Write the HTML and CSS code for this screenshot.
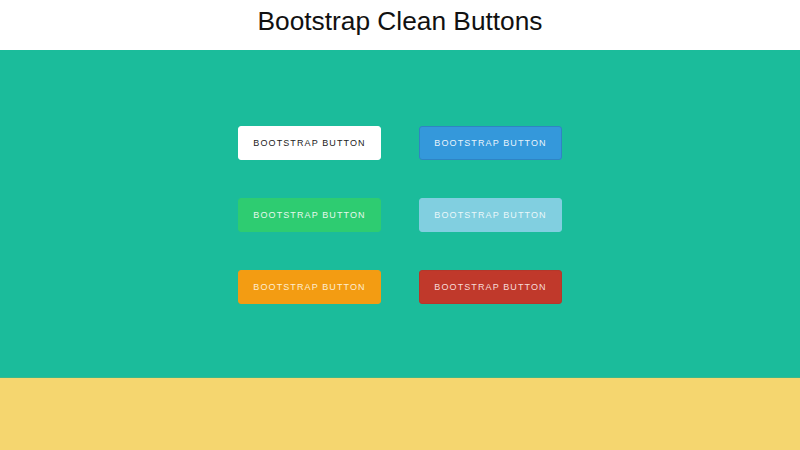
FILE: index.html
```html
<!DOCTYPE html>
<html lang="en">
<head>
<meta charset="utf-8">
<title>Bootstrap Clean Buttons</title>
<link rel="stylesheet" href="styles.css">
</head>
<body>
  <header class="page-header">
    <h1 class="page-title">Bootstrap Clean Buttons</h1>
  </header>
  <section class="showcase">
    <div class="button-grid">
      <button class="btn btn-default">Bootstrap Button</button>
      <button class="btn btn-primary">Bootstrap Button</button>
      <button class="btn btn-success">Bootstrap Button</button>
      <button class="btn btn-info">Bootstrap Button</button>
      <button class="btn btn-warning">Bootstrap Button</button>
      <button class="btn btn-danger">Bootstrap Button</button>
    </div>
  </section>
  <footer class="page-footer"></footer>
</body>
</html>
```
FILE: styles.css
```css
* {
  box-sizing: border-box;
}

html, body {
  margin: 0;
  padding: 0;
}

body {
  font-family: "Liberation Sans", Arial, sans-serif;
  background: #f5d66f;
  min-height: 450px;
}

.page-header {
  background: #ffffff;
  height: 50px;
  display: flex;
  align-items: center;
  justify-content: center;
}

.page-title {
  margin: 0;
  font-size: 26.3px;
  font-weight: 400;
  color: #111;
  line-height: 1;
  padding-bottom: 8px;
}

.showcase {
  background: #1bbc9b;
  height: 328px;
  display: flex;
  justify-content: center;
  padding-top: 76px;
  border-bottom: 1px solid #3cb88b;
}

.button-grid {
  display: grid;
  grid-template-columns: 143px 143px;
  grid-auto-rows: 34px;
  column-gap: 38px;
  row-gap: 38px;
}

.btn {
  font-family: "Liberation Sans", Arial, sans-serif;
  font-size: 9px;
  letter-spacing: 1.1px;
  text-transform: uppercase;
  border: 1px solid transparent;
  border-radius: 3px;
  padding: 0;
  cursor: pointer;
  color: #ffffff;
}

.btn-default {
  background: #ffffff;
  color: #222;
  border-color: #ffffff;
}

.btn-primary {
  background: #3498db;
  border-color: #2f84c4;
  color: #e8f4fb;
}

.btn-success {
  background: #2ecc71;
  border-color: #2ecc71;
  color: #e6f8ec;
}

.btn-info {
  background: #81cfe0;
  border-color: #81cfe0;
  color: #eaf7fa;
}

.btn-warning {
  background: #f39c12;
  border-color: #f39c12;
  color: #fdeed2;
}

.btn-danger {
  background: #c0392b;
  border-color: #b5372a;
  color: #f6dcd8;
}

.page-footer {
  height: 72px;
  background: #f5d66f;
}
```
